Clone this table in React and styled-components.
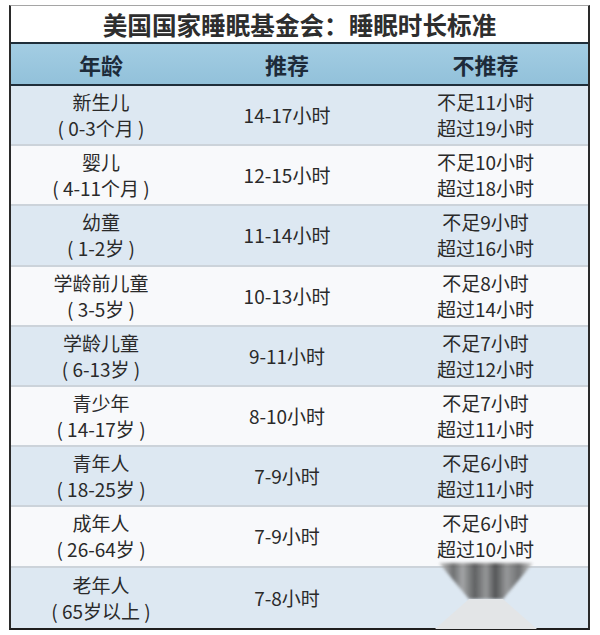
import React from "react";
import styled, { createGlobalStyle } from "styled-components";

const Global = createGlobalStyle`
  html, body { margin: 0; padding: 0; background: #ffffff; }
  body { font-family: "Noto Sans CJK SC", "Noto Sans", sans-serif; }
`;

const Page = styled.div`
  width: 600px;
  height: 635px;
  padding: 5px 0 0 9px;
  box-sizing: border-box;
  background: #fff;
`;

const Frame = styled.div`
  position: relative;
  width: 581px;
  box-sizing: border-box;
  border-top: 1px solid #a5a5a5;
  border-left: 2px solid #2a2a2a;
  border-right: 2px solid #2a2a2a;
  border-bottom: 2px solid #1e1e1e;
  background: #fff;
`;

const Title = styled.div`
  height: 36px;
  display: flex;
  align-items: center;
  justify-content: center;
  font-size: 24.6px;
  font-weight: 700;
  color: #2e2e2e;
`;

const Grid = styled.div`
  display: grid;
  grid-template-columns: 180px 192px 1fr;
`;

const HeaderRow = styled(Grid)`
  height: 40px;
  background: linear-gradient(#a3cde3, #92c1da);
  border-top: 2px solid #1f2e3a;
  border-bottom: 2px solid #1f2e3a;
`;

const HeadCell = styled.div`
  display: flex;
  align-items: center;
  justify-content: center;
  font-size: 22px;
  font-weight: 700;
  color: #1d2b3a;
`;

const Row = styled(Grid)`
  height: 60.2px;
  box-sizing: border-box;
  background: ${(p) => (p.$alt ? "#f8f9fb" : "#dde8f2")};
  border-bottom: ${(p) => (p.$last ? "none" : "2px solid #ccd3da")};
`;

const Cell = styled.div`
  display: flex;
  flex-direction: column;
  align-items: center;
  justify-content: center;
  font-size: 19px;
  line-height: 26px;
  color: #2a2a2a;
  white-space: pre;
`;

const Smudge = styled.svg`
  position: absolute;
  left: 422px;
  top: 551px;
  width: 106px;
  height: 72px;
  pointer-events: none;
`;

const rows = [
  ["新生儿", "( 0-3个月 )", "14-17小时", "不足11小时", "超过19小时"],
  ["婴儿", "( 4-11个月 )", "12-15小时", "不足10小时", "超过18小时"],
  ["幼童", "( 1-2岁 )", "11-14小时", "不足9小时", "超过16小时"],
  ["学龄前儿童", "( 3-5岁 )", "10-13小时", "不足8小时", "超过14小时"],
  ["学龄儿童", "( 6-13岁 )", "9-11小时", "不足7小时", "超过12小时"],
  ["青少年", "( 14-17岁 )", "8-10小时", "不足7小时", "超过11小时"],
  ["青年人", "( 18-25岁 )", "7-9小时", "不足6小时", "超过11小时"],
  ["成年人", "( 26-64岁 )", "7-9小时", "不足6小时", "超过10小时"],
  ["老年人", "( 65岁以上 )", "7-8小时", "", ""],
];

export default function App() {
  return (
    <Page>
      <Global />
      <Frame>
        <Title>美国国家睡眠基金会：睡眠时长标准</Title>
        <HeaderRow>
          <HeadCell>年龄</HeadCell>
          <HeadCell>推荐</HeadCell>
          <HeadCell>不推荐</HeadCell>
        </HeaderRow>
        {rows.map((r, i) => (
          <Row key={i} $alt={i % 2 === 1} $last={i === rows.length - 1}>
            <Cell>
              <span>{r[0]}</span>
              <span>{r[1]}</span>
            </Cell>
            <Cell>{r[2]}</Cell>
            <Cell>
              {r[3] && <span>{r[3]}</span>}
              {r[4] && <span>{r[4]}</span>}
            </Cell>
          </Row>
        ))}
        <Smudge viewBox="0 0 106 72">
          <defs>
            <linearGradient id="streak" x1="0" y1="0" x2="1" y2="0">
              <stop offset="0" stopColor="#c8c8c8" />
              <stop offset="0.15" stopColor="#5a5a5a" />
              <stop offset="0.25" stopColor="#9a9a9a" />
              <stop offset="0.38" stopColor="#4a4a4a" />
              <stop offset="0.5" stopColor="#8a8a8a" />
              <stop offset="0.6" stopColor="#3c3c3c" />
              <stop offset="0.72" stopColor="#8c8c8c" />
              <stop offset="0.85" stopColor="#5c5c5c" />
              <stop offset="1" stopColor="#d0d0d0" />
            </linearGradient>
            <filter id="blur" x="-10%" y="-10%" width="120%" height="120%">
              <feGaussianBlur stdDeviation="1.6" />
            </filter>
          </defs>
          <polygon points="6,6 100,6 70,42 36,42" fill="url(#streak)" filter="url(#blur)" opacity="0.85" />
          <polygon points="36,42 70,42 104,72 2,72" fill="#e3e5e7" />
        </Smudge>
      </Frame>
    </Page>
  );
}
